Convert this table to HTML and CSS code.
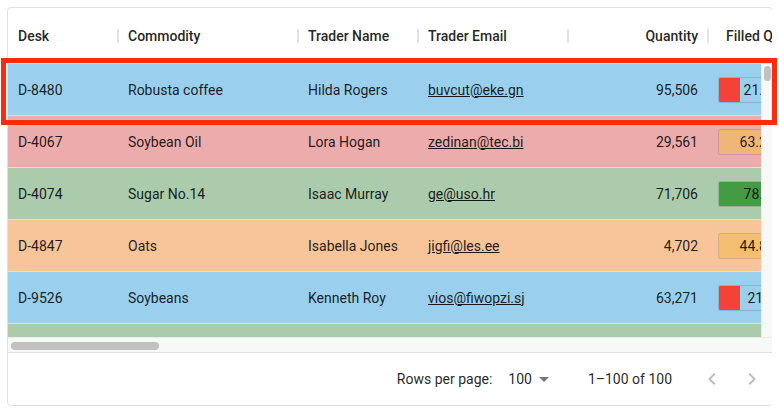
FILE: index.html
```
<!DOCTYPE html>
<html lang="en">
<head>
<meta charset="utf-8">
<title>Trades</title>
<link rel="stylesheet" href="styles.css">
</head>
<body>
<div class="grid">
  <div class="header">
    <div class="hcell c-desk">Desk</div>
    <div class="hcell c-com">Commodity</div>
    <div class="hcell c-name">Trader Name</div>
    <div class="hcell c-email">Trader Email</div>
    <div class="hcell c-qty">Quantity</div>
    <div class="hcell c-fill h-fill">Filled Quantity</div>
  </div>
  <div class="body">
    <div class="viewport">
      <div class="row open">
        <div class="cell c-desk">D-8480</div>
        <div class="cell c-com">Robusta coffee</div>
        <div class="cell c-name">Hilda Rogers</div>
        <div class="cell c-email"><a href="mailto:buvcut@eke.gn">buvcut@eke.gn</a></div>
        <div class="cell c-qty">95,506</div>
        <div class="cell c-fill"><div class="progress"><div class="pval">21.43 %</div><div class="bar low" style="width:21.43%"></div></div></div>
      </div>
      <div class="row rejected">
        <div class="cell c-desk">D-4067</div>
        <div class="cell c-com">Soybean Oil</div>
        <div class="cell c-name">Lora Hogan</div>
        <div class="cell c-email"><a href="mailto:zedinan@tec.bi">zedinan@tec.bi</a></div>
        <div class="cell c-qty">29,561</div>
        <div class="cell c-fill"><div class="progress"><div class="pval">63.275 %</div><div class="bar medium" style="width:63.275%"></div></div></div>
      </div>
      <div class="row filled">
        <div class="cell c-desk">D-4074</div>
        <div class="cell c-com">Sugar No.14</div>
        <div class="cell c-name">Isaac Murray</div>
        <div class="cell c-email"><a href="mailto:ge@uso.hr">ge@uso.hr</a></div>
        <div class="cell c-qty">71,706</div>
        <div class="cell c-fill"><div class="progress"><div class="pval">78.12 %</div><div class="bar high" style="width:78.12%"></div></div></div>
      </div>
      <div class="row partial">
        <div class="cell c-desk">D-4847</div>
        <div class="cell c-com">Oats</div>
        <div class="cell c-name">Isabella Jones</div>
        <div class="cell c-email"><a href="mailto:jigfi@les.ee">jigfi@les.ee</a></div>
        <div class="cell c-qty">4,702</div>
        <div class="cell c-fill"><div class="progress"><div class="pval">44.867 %</div><div class="bar medium" style="width:44.867%"></div></div></div>
      </div>
      <div class="row open">
        <div class="cell c-desk">D-9526</div>
        <div class="cell c-com">Soybeans</div>
        <div class="cell c-name">Kenneth Roy</div>
        <div class="cell c-email"><a href="mailto:vios@fiwopzi.sj">vios@fiwopzi.sj</a></div>
        <div class="cell c-qty">63,271</div>
        <div class="cell c-fill"><div class="progress"><div class="pval">21.7 %</div><div class="bar low" style="width:21.7%"></div></div></div>
      </div>
      <div class="row filled">
        <div class="cell c-desk">D-2371</div>
        <div class="cell c-com">Cotton No.2</div>
        <div class="cell c-name">Mae Ward</div>
        <div class="cell c-email"><a href="mailto:ruk@vo.kg">ruk@vo.kg</a></div>
        <div class="cell c-qty">12,845</div>
        <div class="cell c-fill"><div class="progress"><div class="pval">52.1 %</div><div class="bar medium" style="width:52.1%"></div></div></div>
      </div>
    </div>
    <div class="vtrack"><div class="vthumb"></div></div>
  </div>
  <div class="htrack"><div class="hthumb"></div></div>
  <div class="footer">
    <p class="rpp">Rows per page:</p>
    <div class="select">
      <span class="select-value">100</span>
      <svg class="select-icon" viewBox="0 0 24 24" width="24" height="24"><path d="M7 10l5 5 5-5z"/></svg>
    </div>
    <p class="displayed">1–100 of 100</p>
    <div class="actions">
      <span class="btn"><svg viewBox="0 0 24 24" width="24" height="24"><path d="M15.41 16.59 10.83 12l4.58-4.59L14 6l-6 6 6 6z"/></svg></span>
      <span class="btn"><svg viewBox="0 0 24 24" width="24" height="24"><path d="M8.59 16.59 13.17 12 8.59 7.41 10 6l6 6-6 6z"/></svg></span>
    </div>
  </div>
</div>
<div class="highlight"></div>
</body>
</html>
```

FILE: styles.css
```
html, body {
  background: #fff;
}
body {
  margin: 7px;
  font-family: Roboto, "Liberation Sans", Arial, sans-serif;
  font-size: 14px;
  color: rgba(0, 0, 0, 0.87);
}
.grid {
  width: 766px;
  height: 399px;
  box-sizing: border-box;
  border: 1px solid #e0e0e0;
  border-radius: 4px;
  display: flex;
  flex-direction: column;
  overflow: hidden;
}
.header {
  flex: none;
  height: 56px;
  box-sizing: border-box;
  border-bottom: 1px solid #e0e0e0;
  display: flex;
  overflow: hidden;
}
.hcell {
  flex: none;
  position: relative;
  display: flex;
  align-items: center;
  padding: 0 10px;
  box-sizing: border-box;
  font-weight: 500;
  white-space: nowrap;
}
.hcell::after {
  content: "";
  position: absolute;
  right: -1px;
  top: 21px;
  width: 2px;
  height: 14px;
  background: #e3e3e3;
}
.h-fill {
  padding-left: 18px;
}
.c-desk { width: 110px; }
.c-com { width: 180px; }
.c-name { width: 120px; }
.c-email { width: 150px; }
.c-qty { width: 140px; justify-content: flex-end; }
.c-fill { width: 120px; }

.body {
  flex: none;
  height: 273px;
  display: flex;
}
.viewport {
  flex: 1;
  min-width: 0;
  overflow: hidden;
}
.row {
  display: flex;
  height: 52px;
  box-sizing: border-box;
  border-bottom: 1px solid #e0e0e0;
}
.row.open { background: #9acfed; }
.row.rejected { background: #edacac; }
.row.filled { background: #abcbad; }
.row.partial { background: #f8c49a; }
.cell {
  flex: none;
  display: flex;
  align-items: center;
  padding: 0 10px;
  box-sizing: border-box;
  white-space: nowrap;
  overflow: hidden;
}
.cell a {
  color: inherit;
  text-decoration: underline;
}
.progress {
  position: relative;
  width: 100%;
  height: 26px;
  box-sizing: border-box;
  border: 1px solid rgba(0, 0, 0, 0.12);
  border-radius: 2px;
  overflow: hidden;
}
.pval {
  position: absolute;
  inset: 0;
  line-height: 24px;
  display: flex;
  justify-content: center;
}
.bar {
  height: 100%;
}
.bar.low { background: #f44336; }
.bar.medium { background: #efbb5aa3; }
.bar.high { background: #088208a3; }

.vtrack {
  flex: none;
  width: 11px;
  box-sizing: border-box;
  border-left: 1px solid #ebebeb;
  background: #f8f8f8;
  padding: 2px 0 0 2px;
}
.vthumb {
  width: 7px;
  height: 15px;
  border-radius: 4px;
  background: #c1c1c1;
}
.htrack {
  flex: none;
  height: 15px;
  box-sizing: border-box;
  border-top: 1px solid #ebebeb;
  background: #f8f8f8;
  padding: 4px 0 0 3px;
}
.hthumb {
  width: 148px;
  height: 8px;
  border-radius: 4px;
  background: #c1c1c1;
}
.footer {
  flex: none;
  height: 53px;
  box-sizing: border-box;
  border-top: 1px solid #e0e0e0;
  display: flex;
  align-items: center;
  justify-content: flex-end;
}
.footer p {
  margin: 0;
}
.select {
  display: flex;
  align-items: center;
  margin: 0 32px 0 8px;
  padding-left: 8px;
}
.select-icon {
  fill: rgba(0, 0, 0, 0.54);
  display: block;
}
.actions {
  display: flex;
  margin-left: 20px;
}
.btn {
  display: block;
  padding: 8px;
}
.btn svg {
  display: block;
  fill: rgba(0, 0, 0, 0.26);
}
.highlight {
  position: absolute;
  left: 1px;
  top: 58px;
  width: 776px;
  height: 67px;
  box-sizing: border-box;
  border: 5px solid #fc2a0f;
}
```
